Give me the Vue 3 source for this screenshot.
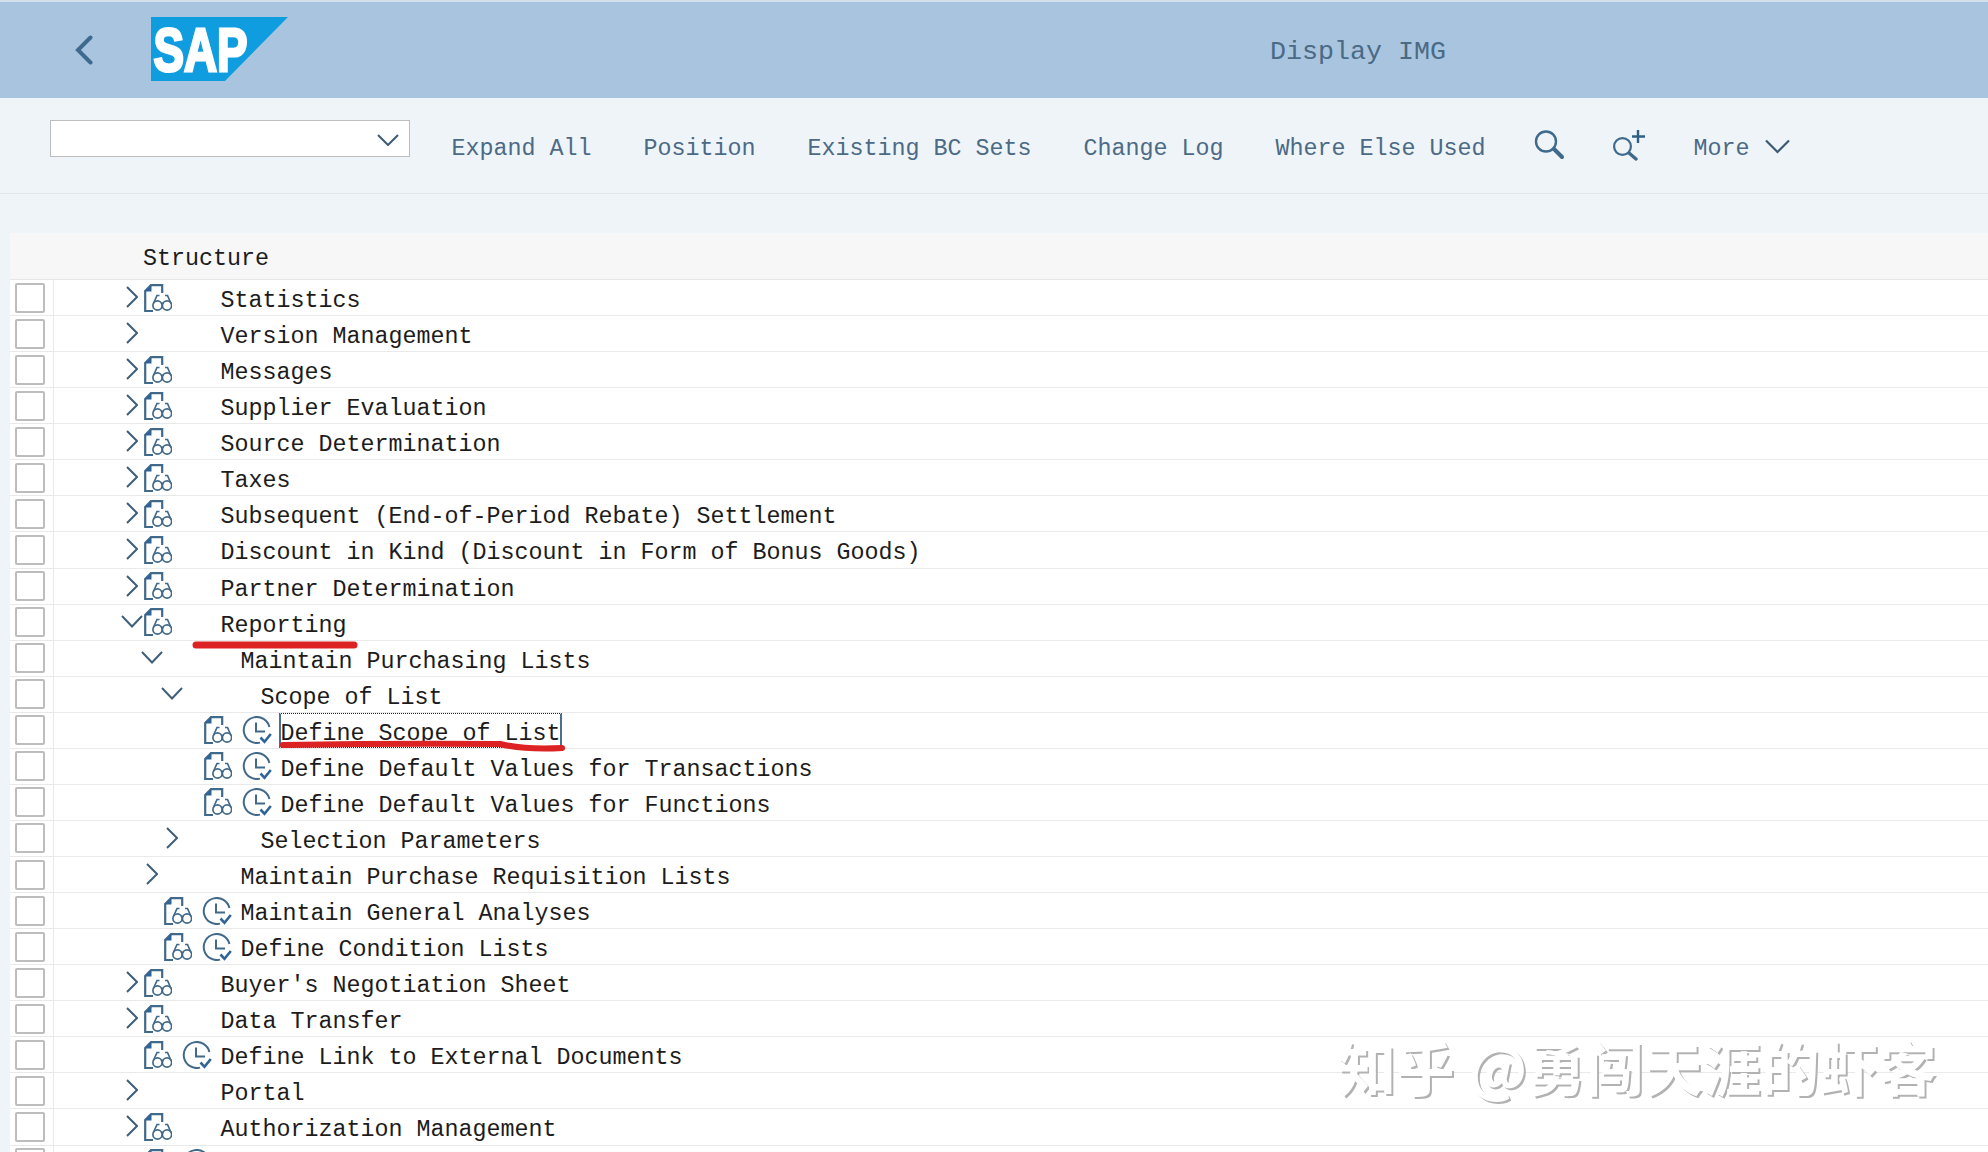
<script setup>
const tools = ['Expand All', 'Position', 'Existing BC Sets', 'Change Log', 'Where Else Used']
const rows = [
  { t: 'Statistics', l: 0, a: 'r', d: 1 },
  { t: 'Version Management', l: 0, a: 'r' },
  { t: 'Messages', l: 0, a: 'r', d: 1 },
  { t: 'Supplier Evaluation', l: 0, a: 'r', d: 1 },
  { t: 'Source Determination', l: 0, a: 'r', d: 1 },
  { t: 'Taxes', l: 0, a: 'r', d: 1 },
  { t: 'Subsequent (End-of-Period Rebate) Settlement', l: 0, a: 'r', d: 1 },
  { t: 'Discount in Kind (Discount in Form of Bonus Goods)', l: 0, a: 'r', d: 1 },
  { t: 'Partner Determination', l: 0, a: 'r', d: 1 },
  { t: 'Reporting', l: 0, a: 'd', d: 1 },
  { t: 'Maintain Purchasing Lists', l: 1, a: 'd' },
  { t: 'Scope of List', l: 2, a: 'd' },
  { t: 'Define Scope of List', l: 3, d: 1, c: 1, f: 1 },
  { t: 'Define Default Values for Transactions', l: 3, d: 1, c: 1 },
  { t: 'Define Default Values for Functions', l: 3, d: 1, c: 1 },
  { t: 'Selection Parameters', l: 2, a: 'r' },
  { t: 'Maintain Purchase Requisition Lists', l: 1, a: 'r' },
  { t: 'Maintain General Analyses', l: 1, d: 1, c: 1 },
  { t: 'Define Condition Lists', l: 1, d: 1, c: 1 },
  { t: "Buyer's Negotiation Sheet", l: 0, a: 'r', d: 1 },
  { t: 'Data Transfer', l: 0, a: 'r', d: 1 },
  { t: 'Define Link to External Documents', l: 0, d: 1, c: 1 },
  { t: 'Portal', l: 0, a: 'r' },
  { t: 'Authorization Management', l: 0, a: 'r', d: 1 },
  { t: '', l: 0, d: 1, c: 1 }
]
</script>

<template>
  <div class="page">
    <svg class="defs" width="0" height="0">
      <defs>
        <symbol id="doc" viewBox="0 0 28 28">
          <path d="M9 27H1.2V7L7 1.2H18.2V9" fill="none" stroke="#41698a" stroke-width="2.2" />
          <path d="M1 7.5L7.5 1V7.5Z" fill="#2f6496" />
          <g fill="none" stroke="#41698a" stroke-width="1.7">
            <circle cx="13.5" cy="21.5" r="4.6" />
            <circle cx="23" cy="21.5" r="4.6" />
            <path d="M9.4 19.5L13 11.5H15.5M27 19.5L23.5 11.5H21M17 20Q18.2 18.8 19.5 20" />
          </g>
        </symbol>
        <symbol id="clock" viewBox="0 0 30 28">
          <g fill="none" stroke="#41698a" stroke-width="2">
            <path d="M18 26.6A13 13 0 1 1 27.4 11" />
            <path d="M14 6.5V15.5H23" />
          </g>
          <path d="M18.5 21.5L22.5 25.8L28.8 18" fill="none" stroke="#2f6496" stroke-width="2.6" />
        </symbol>
      </defs>
    </svg>

    <header class="shell">
      <svg class="back" width="18" height="30" viewBox="0 0 18 30">
        <path d="M15.5 2.5L3 15L15.5 27.5" fill="none" stroke="#3f6a90" stroke-width="4" stroke-linecap="round" />
      </svg>
      <svg class="logo" width="137" height="64" viewBox="0 0 137 64">
        <path d="M0 0H137L74 64H0Z" fill="#109ddf" />
        <text x="2.5" y="54" class="logo-text" textLength="94" lengthAdjust="spacingAndGlyphs">SAP</text>
      </svg>
      <div class="title">Display IMG</div>
    </header>

    <nav class="toolbar">
      <div class="select">
        <svg width="22" height="12" viewBox="0 0 22 12">
          <path d="M1 1L11 11L21 1" fill="none" stroke="#3d5a73" stroke-width="2" />
        </svg>
      </div>
      <div class="tools">
        <span v-for="tool in tools" :key="tool">{{ tool }}</span>
      </div>
      <div class="tool-icons">
        <svg class="lift" width="32" height="30" viewBox="0 0 32 30">
          <circle cx="13" cy="11.5" r="10" fill="none" stroke="#3f6a8c" stroke-width="2.4" />
          <path d="M21 19L29 27" stroke="#3f6a8c" stroke-width="4" stroke-linecap="round" />
        </svg>
        <svg class="lift" width="35" height="32" viewBox="0 0 35 32">
          <circle cx="10.5" cy="17.5" r="8.4" fill="none" stroke="#3f6a8c" stroke-width="2.2" />
          <path d="M17 24L24 30" stroke="#3f6a8c" stroke-width="3.4" stroke-linecap="round" />
          <path d="M26 1V14M20 7.5H33" stroke="#2f6084" stroke-width="2.4" />
        </svg>
        <span class="more">More
          <svg class="lift-small" width="25" height="15" viewBox="0 0 25 15">
            <path d="M1 1.5L12.5 13L24 1.5" fill="none" stroke="#3d5a73" stroke-width="2.2" />
          </svg>
        </span>
      </div>
    </nav>

    <main class="table">
      <div class="head">Structure</div>
      <div v-for="(row, i) in rows" :key="i" class="row">
        <div class="check"><span class="box"></span></div>
        <div class="node" :style="{ paddingLeft: 65 + row.l * 20 + 'px' }">
          <span class="arrow">
            <svg v-if="row.a === 'r'" width="12" height="22" viewBox="0 0 12 22">
              <path d="M1 1L11 11L1 21" fill="none" stroke="#3f5f7a" stroke-width="2" />
            </svg>
            <svg v-else-if="row.a === 'd'" width="22" height="13" viewBox="0 0 22 13">
              <path d="M1 1L11 11.5L21 1" fill="none" stroke="#3f5f7a" stroke-width="2" />
            </svg>
          </span>
          <span class="slot-doc">
            <svg v-if="row.d" width="28" height="28"><use href="#doc" /></svg>
          </span>
          <span class="slot-clock">
            <svg v-if="row.c" width="30" height="28"><use href="#clock" /></svg>
          </span>
          <span class="label" :class="{ focus: row.f }">{{ row.t }}</span>
        </div>
      </div>
    </main>

    <div class="watermark">知乎 @勇闯天涯的虾客</div>

    <svg class="marks" width="1988" height="1152" viewBox="0 0 1988 1152">
      <path d="M196 645H354" stroke="#dc2222" stroke-width="7" stroke-linecap="round" fill="none" />
      <path d="M283 745Q400 743 500 744Q525 750 562 748" stroke="#dc2222" stroke-width="6" stroke-linecap="round" fill="none" />
    </svg>
  </div>
</template>

<style>
html, body { margin: 0; background: #eff4f9; overflow: hidden; }
</style>

<style scoped>
.page {
  position: relative;
  width: 1988px;
  height: 1152px;
  overflow: hidden;
  background: #eff4f9;
  font-family: "Liberation Mono", monospace;
  font-size: 23.33px;
  color: #1c1c1c;
}
.defs { position: absolute; }
.shell {
  box-sizing: border-box;
  height: 98px;
  display: flex;
  align-items: center;
  background: #a9c4de;
  border-top: 2px solid #d3e0ec;
  padding-left: 75px;
}
.back { margin-right: 58px; }
.logo { display: block; margin-top: -3px; overflow: visible; }
.logo-text {
  font-family: "Liberation Sans", sans-serif;
  font-size: 62px;
  font-weight: 700;
  fill: #fff;
  stroke: #fff;
  stroke-width: 3px;
}
.title {
  margin: 4px 0 0 982px;
  font-size: 26.67px;
  color: #4a6a85;
}
.toolbar {
  box-sizing: border-box;
  height: 96px;
  display: flex;
  align-items: center;
  padding: 6px 0 0 50px;
  border-bottom: 1px solid #dfe5ea;
  color: #4c6a85;
}
.select {
  box-sizing: border-box;
  width: 360px;
  height: 37px;
  margin: -21px 41.5px 0 0;
  background: #fff;
  border: 1.5px solid #bdbdbd;
  display: flex;
  align-items: center;
  justify-content: flex-end;
  padding: 4px 10px 0 0;
}
.tools { display: flex; gap: 52px; }
.tool-icons {
  display: flex;
  align-items: center;
  gap: 47px;
  margin-left: 47px;
}
.lift { margin-top: -7px; }
.lift-small { margin-top: -4px; }
.more { display: flex; align-items: center; gap: 15px; }
.table {
  margin: 39px 0 0 10px;
  background: #fff;
}
.head {
  box-sizing: border-box;
  height: 47px;
  padding: 8px 0 0 133px;
  line-height: 36px;
  background: #f7f7f7;
  border-bottom: 1px solid #e6e6e6;
}
.row {
  box-sizing: border-box;
  height: 36.07px;
  display: flex;
  border-bottom: 1px solid #e9e9e9;
}
.check {
  box-sizing: border-box;
  width: 44px;
  flex: none;
  display: flex;
  align-items: center;
  padding-left: 5px;
  border-right: 1px solid #e9e9e9;
}
.box {
  box-sizing: border-box;
  width: 30px;
  height: 30px;
  background: #fff;
  border: 2.5px solid #bdbdbd;
  border-radius: 2px;
}
.node {
  display: flex;
  align-items: center;
  height: 100%;
  white-space: pre;
}
.arrow {
  width: 25px;
  flex: none;
  display: flex;
  justify-content: center;
  margin-top: -1px;
}
.slot-doc { width: 38px; height: 28px; flex: none; }
.slot-clock { width: 38px; height: 28px; flex: none; }
.slot-doc svg, .slot-clock svg { display: block; }
.label {
  position: relative;
  height: 35px;
  line-height: 42px;
  margin-left: 0.5px;
}
.focus::after {
  content: "";
  position: absolute;
  inset: 0 -2px 0 -2px;
  border-top: 1px dotted #222;
  border-bottom: 1px dotted #222;
  border-left: 2px solid #4a6f90;
  border-right: 2px solid #4a6f90;
}
.watermark {
  position: absolute;
  left: 1338px;
  top: 1026px;
  font-family: "Noto Sans CJK SC", sans-serif;
  font-size: 58px;
  line-height: 80px;
  font-weight: 700;
  letter-spacing: 0.5px;
  white-space: pre;
  color: #fff;
  text-shadow: 2px 2px 0 #b2b2b2;
}
.marks {
  position: absolute;
  left: 0;
  top: 0;
  pointer-events: none;
}
</style>
